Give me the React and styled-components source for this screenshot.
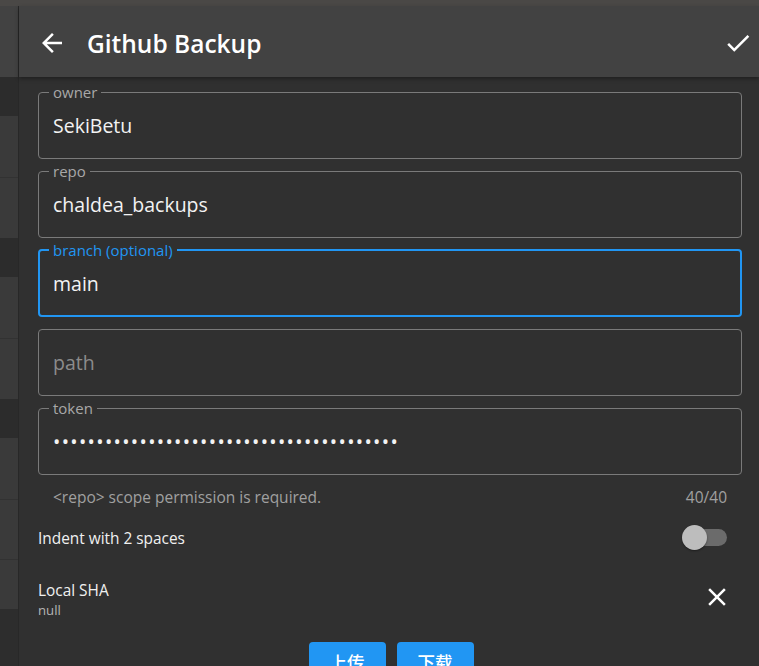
import React from "react";
import styled, { createGlobalStyle } from "styled-components";

const Global = createGlobalStyle`
  html, body { margin: 0; padding: 0; background: #303030; }
  body { font-family: "Open Sans", "Noto Sans CJK SC", sans-serif; -webkit-font-smoothing: antialiased; }
  * { box-sizing: border-box; }
`;

const Shell = styled.div`
  width: 759px;
  height: 666px;
  overflow: hidden;
  display: flex;
  flex-direction: column;
  background: #303030;
`;

const TopBand = styled.div`
  height: 6px;
  flex: none;
  background: #4a4846;
`;

const Main = styled.div`
  flex: 1;
  min-height: 0;
  display: flex;
`;

const Strip = styled.div`
  width: 19px;
  flex: none;
  display: flex;
  flex-direction: column;
  background: #2d2d2d;
  border-right: 1px solid #282828;
`;

const StripBar = styled.div`
  height: 71px;
  flex: none;
  background: #424242;
`;

const StripHeader = styled.div`
  height: 39px;
  flex: none;
  background: #2c2c2c;
`;

const StripTile = styled.div`
  height: ${(p) => p.$h}px;
  flex: none;
  background: #3a3a3a;
  border-top: ${(p) => (p.$first ? "none" : "1px solid #323232")};
`;

const Pane = styled.div`
  flex: 1;
  min-width: 0;
  display: flex;
  flex-direction: column;
  background: #303030;
`;

const AppBar = styled.header`
  height: 71px;
  flex: none;
  display: flex;
  align-items: center;
  padding: 3px 6px 0 18px;
  background: #424242;
  box-shadow: 0 2px 4px rgba(0, 0, 0, 0.35);
  position: relative;
  z-index: 1;
`;

const IconBox = styled.span`
  display: inline-flex;
  align-items: center;
  justify-content: center;
  flex: none;
  color: #fff;
`;

const Title = styled.h1`
  flex: 1;
  margin: 0 0 0 20px;
  font-size: 24.5px;
  font-weight: 600;
  color: #fff;
  letter-spacing: 0;
`;

const Body = styled.div`
  flex: 1;
  min-height: 0;
  display: flex;
  flex-direction: column;
  padding: 6px 17px 0 19px;
`;

const Fields = styled.div`
  display: flex;
  flex-direction: column;
  gap: 3px;
`;

const Field = styled.fieldset`
  margin: 0;
  min-width: 0;
  padding: 0 ${(p) => (p.$focused ? 13 : 14)}px;
  border: ${(p) => (p.$focused ? "2px solid #2196f3" : "1px solid #7a7a7a")};
  border-radius: 4px;
`;

const Label = styled.legend`
  margin-left: -4px;
  padding: 0 ${(p) => (p.$empty ? 0 : 4)}px;
  height: 18px;
  font-size: 15px;
  line-height: 18px;
  color: ${(p) => (p.$focused ? "#2196f3" : "#a8a8a8")};
`;

const Value = styled.div`
  font-size: 19.5px;
  line-height: 24px;
  padding: 13px 0 ${(p) => (p.$focused ? 19 : 20)}px;
  color: ${(p) => (p.$hint ? "#8c8c8c" : "#f3f3f3")};
  letter-spacing: ${(p) => (p.$dots ? "1.32px" : "0")};
  white-space: nowrap;
  overflow: hidden;
`;

const HelperRow = styled.div`
  display: flex;
  justify-content: space-between;
  margin-top: 12px;
  padding: 0 15px 0 15px;
  font-size: 15.5px;
  line-height: 20px;
  color: #a0a0a0;
`;

const Row = styled.div`
  height: ${(p) => p.$h}px;
  flex: none;
  display: flex;
  align-items: ${(p) => (p.$top ? "flex-start" : "center")};
  justify-content: space-between;
  padding-right: 15px;
`;

const RowText = styled.div`
  display: flex;
  flex-direction: column;
  padding-top: ${(p) => p.$pt || 0}px;
`;

const RowTitle = styled.div`
  font-size: 15.4px;
  line-height: 20px;
  color: #f0f0f0;
  padding-top: ${(p) => p.$pt || 0}px;
`;

const RowSub = styled.div`
  font-size: 13.2px;
  line-height: 19px;
  color: #b4b4b4;
`;

const SwitchTrack = styled.div`
  position: relative;
  width: 43px;
  height: 17px;
  margin-left: 2px;
  border-radius: 9px;
  background: #6b6b6b;
`;

const SwitchThumb = styled.div`
  position: absolute;
  left: -2px;
  top: -4px;
  width: 25px;
  height: 25px;
  border-radius: 50%;
  background: #bdbdbd;
  box-shadow: 0 1px 2px rgba(0, 0, 0, 0.4);
`;

const CloseBox = styled(IconBox)`
  margin-top: 15px;
  margin-right: -5px;
`;

const Buttons = styled.div`
  display: flex;
  justify-content: center;
  gap: 11px;
  padding-top: 11px;
  padding-left: 2px;
`;

const Button = styled.button`
  height: 36px;
  width: 77px;
  border: none;
  border-radius: 4px;
  background: #2196f3;
  color: #fff;
  font-family: "Noto Sans CJK SC", sans-serif;
  font-size: 17.5px;
  font-weight: 500;
  line-height: 36px;
  padding: 2px 0 0;
`;

const ArrowBack = () => (
  <svg width="30" height="30" viewBox="0 0 24 24" fill="currentColor">
    <path d="M20 11H7.83l5.59-5.59L12 4l-8 8 8 8 1.41-1.41L7.83 13H20v-2z" />
  </svg>
);

const Check = () => (
  <svg width="30" height="30" viewBox="0 0 24 24" fill="currentColor">
    <path d="M9 16.17L4.83 12l-1.42 1.41L9 19 21 7l-1.41-1.41z" />
  </svg>
);

const Close = () => (
  <svg width="30" height="30" viewBox="0 0 24 24" fill="currentColor">
    <path d="M19 6.41L17.59 5 12 10.59 6.41 5 5 6.41 10.59 12 5 17.59 6.41 19 12 13.41 17.59 19 19 17.59 13.41 12z" />
  </svg>
);

const stripGroups = [
  [61, 61],
  [61, 61],
  [61, 60, 50],
];

const fields = [
  { label: "owner", value: "SekiBetu" },
  { label: "repo", value: "chaldea_backups" },
  { label: "branch (optional)", value: "main", focused: true },
  { label: "", value: "path", hint: true },
  { label: "token", value: "•".repeat(40), dots: true },
];

export default function App() {
  return (
    <>
      <Global />
      <Shell>
        <TopBand />
        <Main>
          <Strip>
            <StripBar />
            {stripGroups.map((g, gi) => (
              <React.Fragment key={gi}>
                <StripHeader />
                {g.map((h, i) => (
                  <StripTile key={i} $h={h} $first={i === 0} />
                ))}
              </React.Fragment>
            ))}
          </Strip>
          <Pane>
            <AppBar>
              <IconBox>
                <ArrowBack />
              </IconBox>
              <Title>Github Backup</Title>
              <IconBox>
                <Check />
              </IconBox>
            </AppBar>
            <Body>
              <Fields>
                {fields.map((f, i) => (
                  <Field key={i} $focused={f.focused}>
                    <Label $focused={f.focused} $empty={!f.label}>
                      {f.label}
                    </Label>
                    <Value $focused={f.focused} $hint={f.hint} $dots={f.dots}>
                      {f.value}
                    </Value>
                  </Field>
                ))}
              </Fields>
              <HelperRow>
                <span>&lt;repo&gt; scope permission is required.</span>
                <span>40/40</span>
              </HelperRow>
              <Row $h={60}>
                <RowTitle $pt={3}>Indent with 2 spaces</RowTitle>
                <SwitchTrack>
                  <SwitchThumb />
                </SwitchTrack>
              </Row>
              <Row $h={64} $top>
                <RowText $pt={14}>
                  <RowTitle>Local SHA</RowTitle>
                  <RowSub>null</RowSub>
                </RowText>
                <CloseBox>
                  <Close />
                </CloseBox>
              </Row>
              <Buttons>
                <Button>上传</Button>
                <Button>下载</Button>
              </Buttons>
            </Body>
          </Pane>
        </Main>
      </Shell>
    </>
  );
}
